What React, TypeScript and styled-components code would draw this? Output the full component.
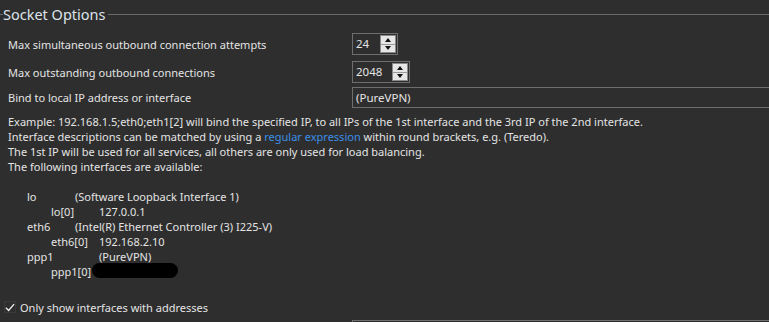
import React from "react";
import styled, { createGlobalStyle } from "styled-components";

const GlobalStyle = createGlobalStyle`
  html, body {
    margin: 0;
    padding: 0;
    background: #2e2e2e;
    overflow: hidden;
  }
  body {
    font-family: "Noto Sans", "Open Sans", sans-serif;
    font-size: 11px;
    color: #e4e4e4;
  }
`;

const Page = styled.div`
  width: 769px;
  height: 322px;
  overflow: hidden;
  background: #2e2e2e;
`;

const GroupHeader = styled.div`
  display: flex;
  align-items: center;
  height: 28px;
`;

const HeaderLine = styled.div<{ $grow?: boolean }>`
  height: 1px;
  background: #6a6a6a;
  width: ${(p) => (p.$grow ? "auto" : "3px")};
  flex: ${(p) => (p.$grow ? 1 : "none")};
  margin-left: ${(p) => (p.$grow ? "2px" : "0")};
`;

const GroupTitle = styled.span`
  font-size: 14.5px;
  color: #dde3ea;
  line-height: 28px;
`;

const Body = styled.div`
  padding-left: 8px;
`;

const OptionRow = styled.div<{ $h: number; $top: number }>`
  display: grid;
  grid-template-columns: 344px 1fr;
  align-items: center;
  height: ${(p) => p.$h}px;
  margin-top: ${(p) => p.$top}px;
`;

const Label = styled.span`
  white-space: nowrap;
`;

const SpinBox = styled.div<{ $w: number }>`
  display: flex;
  width: ${(p) => p.$w}px;
  height: 22px;
  box-sizing: border-box;
  border: 1px solid #6e6e6e;
  padding: 1px 1px 1px 0;
`;

const SpinValue = styled.span`
  flex: 1;
  padding-left: 3px;
  line-height: 18px;
  font-size: 11.5px;
  color: #e4e4e4;
`;

const SpinButtons = styled.div`
  display: flex;
  flex-direction: column;
  width: 14px;
  border: 1px solid #8a8a8a;
  background: #e6e6e6;
`;

const SpinHalf = styled.div<{ $up?: boolean }>`
  flex: 1;
  display: flex;
  align-items: center;
  justify-content: center;
  border-bottom: ${(p) => (p.$up ? "1px solid #9a9a9a" : "none")};
  &::after {
    content: "";
    width: 0;
    height: 0;
    border-left: 3.5px solid transparent;
    border-right: 3.5px solid transparent;
    ${(p) =>
      p.$up ? "border-bottom: 4px solid #111;" : "border-top: 4px solid #111;"}
  }
`;

const TextField = styled.div<{ $open?: boolean }>`
  height: 21px;
  box-sizing: border-box;
  border: 1px solid #6e6e6e;
  border-right: none;
  ${(p) => (p.$open ? "border-bottom: none;" : "")}
  padding-left: 3px;
  line-height: 19px;
  font-size: 11.5px;
  margin-right: -8px;
`;

const Notes = styled.div`
  margin-top: 6px;
  line-height: 15px;
  white-space: nowrap;
`;

const Link = styled.span`
  color: #3b8fe6;
`;

const IfaceList = styled.div`
  margin-top: 15px;
  line-height: 15px;
`;

const IfaceLine = styled.div<{ $indent: number; $col: number }>`
  display: grid;
  grid-template-columns: minmax(${(p) => p.$col}px, max-content) 1fr;
  padding-left: ${(p) => p.$indent}px;
  white-space: nowrap;
`;

const Redacted = styled.span`
  display: inline-block;
  width: 86px;
  height: 15px;
  margin-left: -7px;
  background: #000;
  border-radius: 8px;
  vertical-align: top;
  margin-top: -1px;
`;

const CheckRow = styled.div`
  display: flex;
  align-items: center;
  gap: 4px;
  margin-top: 20px;
  margin-left: -4px;
  height: 16px;
`;

const CheckBox = styled.span`
  width: 12px;
  height: 12px;
  box-sizing: border-box;
  border: 1px solid #3a3a3a;
  display: flex;
  align-items: center;
  justify-content: center;
`;

const BottomRow = styled.div`
  display: grid;
  grid-template-columns: 344px 1fr;
  margin-top: 5px;
`;

const interfaces: { indent: number; col: number; name: string; value: React.ReactNode }[] = [
  { indent: 19, col: 48, name: "lo", value: "(Software Loopback Interface 1)" },
  { indent: 43, col: 48, name: "lo[0]", value: "127.0.0.1" },
  { indent: 19, col: 48, name: "eth6", value: "(Intel(R) Ethernet Controller (3) I225-V)" },
  { indent: 43, col: 48, name: "eth6[0]", value: "192.168.2.10" },
  { indent: 19, col: 72, name: "ppp1", value: "(PureVPN)" },
  { indent: 43, col: 48, name: "ppp1[0]", value: <Redacted /> },
];

function Spin({ value, width }: { value: string; width: number }) {
  return (
    <SpinBox $w={width}>
      <SpinValue>{value}</SpinValue>
      <SpinButtons>
        <SpinHalf $up />
        <SpinHalf />
      </SpinButtons>
    </SpinBox>
  );
}

export default function App() {
  return (
    <Page>
      <GlobalStyle />
      <GroupHeader>
        <HeaderLine />
        <GroupTitle>Socket Options</GroupTitle>
        <HeaderLine $grow />
      </GroupHeader>
      <Body>
        <OptionRow $h={22} $top={5}>
          <Label>Max simultaneous outbound connection attempts</Label>
          <Spin value="24" width={46} />
        </OptionRow>
        <OptionRow $h={22} $top={6}>
          <Label>Max outstanding outbound connections</Label>
          <Spin value="2048" width={58} />
        </OptionRow>
        <OptionRow $h={21} $top={4}>
          <Label>Bind to local IP address or interface</Label>
          <TextField>(PureVPN)</TextField>
        </OptionRow>
        <Notes>
          <div>
            Example: 192.168.1.5;eth0;eth1[2] will bind the specified IP, to all IPs of the 1st
            interface and the 3rd IP of the 2nd interface.
          </div>
          <div>
            Interface descriptions can be matched by using a <Link>regular expression</Link> within
            round brackets, e.g. (Teredo).
          </div>
          <div>The 1st IP will be used for all services, all others are only used for load balancing.</div>
          <div>The following interfaces are available:</div>
        </Notes>
        <IfaceList>
          {interfaces.map((it, i) => (
            <IfaceLine key={i} $indent={it.indent} $col={it.col}>
              <span>{it.name}</span>
              <span>{it.value}</span>
            </IfaceLine>
          ))}
        </IfaceList>
        <CheckRow>
          <CheckBox>
            <svg width="11" height="11" viewBox="0 0 11 11">
              <path d="M1 5.8 L4 8.8 L10 1.8" fill="none" stroke="#f2f2f2" strokeWidth="1.4" />
            </svg>
          </CheckBox>
          <span>Only show interfaces with addresses</span>
        </CheckRow>
        <BottomRow>
          <span />
          <TextField $open />
        </BottomRow>
      </Body>
    </Page>
  );
}
